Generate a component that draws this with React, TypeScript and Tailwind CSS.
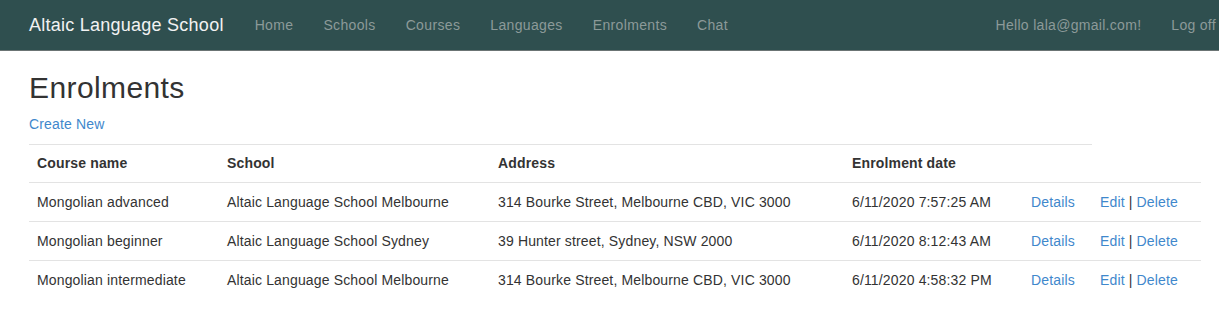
const navLinks = ['Home', 'Schools', 'Courses', 'Languages', 'Enrolments', 'Chat']

const enrolments = [
  {
    course: 'Mongolian advanced',
    school: 'Altaic Language School Melbourne',
    address: '314 Bourke Street, Melbourne CBD, VIC 3000',
    date: '6/11/2020 7:57:25 AM',
  },
  {
    course: 'Mongolian beginner',
    school: 'Altaic Language School Sydney',
    address: '39 Hunter street, Sydney, NSW 2000',
    date: '6/11/2020 8:12:43 AM',
  },
  {
    course: 'Mongolian intermediate',
    school: 'Altaic Language School Melbourne',
    address: '314 Bourke Street, Melbourne CBD, VIC 3000',
    date: '6/11/2020 4:58:32 PM',
  },
]

export default function App() {
  return (
    <div className="min-h-[311px] bg-white text-[14px] leading-5 tracking-[0.15px] text-[#333] font-['Liberation_Sans',Arial,sans-serif] overflow-hidden">
      {/* Navbar */}
      <nav className="h-[51px] bg-[#2f4f4f] border-b border-[#6b7474] flex items-center pl-[14px]">
        <span className="px-[15px] text-[18px] leading-5 tracking-[0.25px] text-[#f2f2f2]">Altaic Language School</span>
        <ul className="flex ml-[1px]">
          {navLinks.map((l) => (
            <li key={l}>
              <a className="block px-[15px] tracking-[0.35px] text-[#8c9a99]">{l}</a>
            </li>
          ))}
        </ul>
        <ul className="flex ml-auto mr-[-12px]">
          <li>
            <a className="block px-[15px] tracking-[0.3px] text-[#8c9a99]">Hello lala@gmail.com!</a>
          </li>
          <li>
            <a className="block px-[15px] tracking-[0.3px] text-[#8c9a99]">Log off</a>
          </li>
        </ul>
      </nav>

      {/* Content */}
      <div className="px-[29px]">
        <h2 className="mt-5 mb-[10px] text-[30px] leading-[33px] tracking-[0.4px] font-normal">Enrolments</h2>
        <p className="mb-[10px]">
          <a className="text-[#3f88cc]">Create New</a>
        </p>

        <table className="w-[1172px] border-collapse">
          <thead>
            <tr>
              <th className="w-[190px] text-left font-bold px-2 py-2 leading-[21px] border-t border-[#e3e3e3]">Course name</th>
              <th className="w-[271px] text-left font-bold px-2 py-2 leading-[21px] border-t border-[#e3e3e3]">School</th>
              <th className="w-[354px] text-left font-bold px-2 py-2 leading-[21px] border-t border-[#e3e3e3]">Address</th>
              <th className="w-[179px] text-left font-bold px-2 py-2 leading-[21px] border-t border-[#e3e3e3]">Enrolment date</th>
              <th className="w-[69px] px-2 py-2 border-t border-[#e3e3e3]"></th>
            </tr>
          </thead>
          <tbody>
            {enrolments.map((e) => (
              <tr key={e.course}>
                <td className="px-2 py-[9px] border-t border-[#e3e3e3]">{e.course}</td>
                <td className="px-2 py-[9px] border-t border-[#e3e3e3]">{e.school}</td>
                <td className="px-2 py-[9px] border-t border-[#e3e3e3]">{e.address}</td>
                <td className="px-2 py-[9px] border-t border-[#e3e3e3]">{e.date}</td>
                <td className="px-2 py-[9px] border-t border-[#e3e3e3]">
                  <a className="text-[#3f88cc]">Details</a>
                </td>
                <td className="px-2 py-[9px] border-t border-[#e3e3e3]">
                  <a className="text-[#3f88cc]">Edit</a> | <a className="text-[#3f88cc]">Delete</a>
                </td>
              </tr>
            ))}
          </tbody>
        </table>
      </div>
    </div>
  )
}
